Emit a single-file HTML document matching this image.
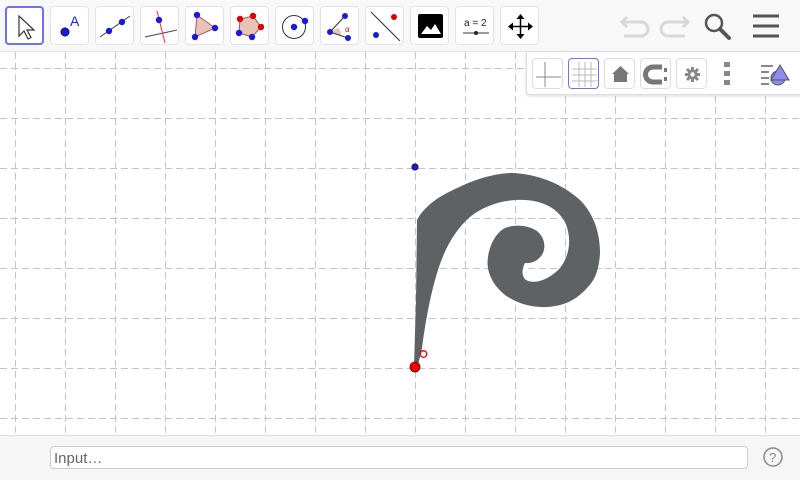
<!DOCTYPE html>
<html><head><meta charset="utf-8"><style>
*{margin:0;padding:0;box-sizing:border-box}
body{width:800px;height:480px;overflow:hidden;background:#fff;font-family:"Liberation Sans",sans-serif;position:relative}
.tb{position:absolute;left:0;top:0;width:800px;height:52px;background:#f8f8f8;border-bottom:1px solid #e0e0e0}
.btn{position:absolute;top:6px;width:39px;height:39px;background:#fff;border:1px solid #e2e2e2;border-radius:4px}
.sel{border:2px solid #6d72f2}
.btn svg{position:absolute;left:0;top:0}
.sb{position:absolute;left:526px;top:52px;width:280px;height:43px;background:#fff;border:1px solid #ddd;border-top:none;border-radius:0 0 0 4px;box-shadow:0 1px 3px rgba(0,0,0,.15)}
.sbt{position:absolute;top:6px;width:31px;height:31px;border:1px solid #ddd;border-radius:4px;background:#fff}
.bot{position:absolute;left:0;top:435px;width:800px;height:45px;background:#f6f6f6;border-top:1px solid #ddd}
.inp{position:absolute;left:50px;top:10px;width:698px;height:23px;background:#fff;border:1px solid #ccc;border-radius:4px;font-size:15px;color:#666;padding:3px 3px}
</style></head><body>
<svg style="position:absolute;left:0;top:0" width="800" height="480">
<g stroke="#c4c4c4" stroke-width="1" stroke-dasharray="7,4">
<line x1="15.5" y1="52" x2="15.5" y2="435"/><line x1="65.5" y1="52" x2="65.5" y2="435"/><line x1="115.5" y1="52" x2="115.5" y2="435"/><line x1="165.5" y1="52" x2="165.5" y2="435"/><line x1="215.5" y1="52" x2="215.5" y2="435"/><line x1="265.5" y1="52" x2="265.5" y2="435"/><line x1="315.5" y1="52" x2="315.5" y2="435"/><line x1="365.5" y1="52" x2="365.5" y2="435"/><line x1="415.5" y1="52" x2="415.5" y2="435"/><line x1="465.5" y1="52" x2="465.5" y2="435"/><line x1="515.5" y1="52" x2="515.5" y2="435"/><line x1="565.5" y1="52" x2="565.5" y2="435"/><line x1="615.5" y1="52" x2="615.5" y2="435"/><line x1="665.5" y1="52" x2="665.5" y2="435"/><line x1="715.5" y1="52" x2="715.5" y2="435"/><line x1="765.5" y1="52" x2="765.5" y2="435"/>
<line x1="0" y1="68.5" x2="800" y2="68.5"/><line x1="0" y1="118.5" x2="800" y2="118.5"/><line x1="0" y1="168.5" x2="800" y2="168.5"/><line x1="0" y1="218.5" x2="800" y2="218.5"/><line x1="0" y1="268.5" x2="800" y2="268.5"/><line x1="0" y1="318.5" x2="800" y2="318.5"/><line x1="0" y1="368.5" x2="800" y2="368.5"/><line x1="0" y1="418.5" x2="800" y2="418.5"/>
</g>
<path fill="#5f6264" d="M414,366 L416,300 L417,220 C425,205 440,196 455,189 C475,179 495,173 513,173 C535,174 560,182 580,200 C595,215 600,235 600,253 C599,270 595,280 587,288 C578,298 568,304 555,306 C540,309 520,306 505,295 C490,283 486,268 488,257 C490,243 497,232 505,228 C515,224 528,225 537,231 C544,237 546,245 543,253 C540,259 533,264 525,263 C522,268 521,276 526,280 C535,285 550,279 560,268 C570,255 572,238 565,222 C557,208 543,201 525,200 C505,199 485,205 470,217 C455,230 445,248 438,270 C430,295 425,325 422,348 L418,365 Z"/>
<circle cx="415" cy="167" r="3.2" fill="#1a1adc" stroke="#113" stroke-width=".8"/>
<circle cx="415" cy="367" r="5" fill="#e00" stroke="#700" stroke-width=".8"/>
<circle cx="423.5" cy="354" r="3.3" fill="#fff" stroke="#e00" stroke-width="1.3"/>
</svg>
<div class="tb">
<div class="btn sel" style="left:5px"><svg width="39" height="39"><path d="M13,9 L13,29 L18,24 L22,32 L25,30.5 L21,23 L28,23 Z" fill="#fff" stroke="#333" stroke-width="1.2" transform="translate(-1,-1)"/></svg></div>
<div class="btn" style="left:50px"><svg width="39" height="39"><circle cx="14" cy="25" r="4.2" fill="#1a1adc" stroke="#000" stroke-width=".6"/><text x="19" y="19" font-size="14" fill="#1a1aff" font-family="Liberation Sans">A</text></svg></div>
<div class="btn" style="left:95px"><svg width="39" height="39"><line x1="4" y1="30" x2="34" y2="9" stroke="#444"/><circle cx="13" cy="24" r="3.2" fill="#1a1adc"/><circle cx="26" cy="15" r="3.2" fill="#1a1adc"/></svg></div>
<div class="btn" style="left:140px"><svg width="39" height="39"><line x1="4" y1="30" x2="36" y2="23" stroke="#444"/><line x1="16" y1="4" x2="24" y2="36" stroke="#f33"/><circle cx="18" cy="13" r="3.2" fill="#1a1adc"/></svg></div>
<div class="btn" style="left:185px"><svg width="39" height="39"><path d="M11,8 L29,21 L9,30 Z" fill="#e8c4b8" stroke="#a55" stroke-width="1"/><circle cx="11" cy="8" r="3.2" fill="#1a1adc"/><circle cx="29" cy="21" r="3.2" fill="#1a1adc"/><circle cx="9" cy="30" r="3.2" fill="#1a1adc"/></svg></div>
<div class="btn" style="left:230px"><svg width="39" height="39"><path d="M9,12 L22,9 L30,20 L21,30 L8,26 Z" fill="#e8c4b8" stroke="#a55"/><circle cx="9" cy="12" r="3.2" fill="#d00"/><circle cx="22" cy="9" r="3.2" fill="#d00"/><circle cx="30" cy="20" r="3.2" fill="#d00"/><circle cx="21" cy="30" r="3.2" fill="#1a1adc"/><circle cx="8" cy="26" r="3.2" fill="#1a1adc"/></svg></div>
<div class="btn" style="left:275px"><svg width="39" height="39"><circle cx="18" cy="20" r="11.5" fill="none" stroke="#333"/><circle cx="18" cy="20" r="3.2" fill="#1a1adc"/><circle cx="29" cy="14" r="3.2" fill="#1a1adc"/></svg></div>
<div class="btn" style="left:320px"><svg width="39" height="39"><path d="M9,25 L17,21 A8,8 0 0,1 20,28 Z" fill="#e8c4b8"/><line x1="9" y1="25" x2="24" y2="9" stroke="#333"/><line x1="9" y1="25" x2="27" y2="31" stroke="#333"/><circle cx="9" cy="25" r="3" fill="#1a1adc"/><circle cx="24" cy="9" r="3" fill="#1a1adc"/><circle cx="27" cy="31" r="3" fill="#1a1adc"/><text x="24" y="25" font-size="8" fill="#e00">α</text></svg></div>
<div class="btn" style="left:365px"><svg width="39" height="39"><line x1="5" y1="5" x2="34" y2="34" stroke="#333"/><circle cx="10" cy="28" r="3" fill="#1a1adc"/><circle cx="28" cy="10" r="3" fill="#d00"/></svg></div>
<div class="btn" style="left:410px"><svg width="39" height="39"><rect x="7" y="7" width="25" height="24" rx="2" fill="#000"/><path d="M10,27 L16,19 L20,23 L24,17 L30,27 Z" fill="#fff"/></svg></div>
<div class="btn" style="left:455px"><svg width="39" height="39"><text x="8" y="19" font-size="10" fill="#222" font-family="Liberation Sans">a = 2</text><line x1="7" y1="26" x2="33" y2="26" stroke="#333"/><circle cx="20" cy="26" r="2" fill="#222"/></svg></div>
<div class="btn" style="left:500px"><svg width="39" height="39"><g stroke="#000" stroke-width="1.5"><line x1="19.5" y1="10" x2="19.5" y2="29"/><line x1="10" y1="19.5" x2="29" y2="19.5"/></g><g fill="#000"><path d="M19.5,7 L15.5,12 L23.5,12Z"/><path d="M19.5,32 L15.5,27 L23.5,27Z"/><path d="M7,19.5 L12,15.5 L12,23.5Z"/><path d="M32,19.5 L27,15.5 L27,23.5Z"/></g></svg></div>
<svg style="position:absolute;left:615px;top:10px" width="180" height="34">
<g fill="none" stroke="#d8d8d8" stroke-width="3"><path d="M12,7 L7,12 L12,17 M7,12 L26,12 A7,7 0 0,1 26,26 L9,26"/><path d="M68,7 L73,12 L68,17 M73,12 L53,12 A7,7 0 0,0 53,26 L70,26"/></g>
<circle cx="99" cy="13" r="8" fill="none" stroke="#555" stroke-width="2.5"/><line x1="105" y1="19" x2="114" y2="28" stroke="#555" stroke-width="4" stroke-linecap="round"/>
<g stroke="#555" stroke-width="3"><line x1="138" y1="6" x2="164" y2="6"/><line x1="138" y1="16" x2="164" y2="16"/><line x1="138" y1="26" x2="164" y2="26"/></g>
</svg>
</div>
<div class="sb">
<div class="sbt" style="left:5px"><svg width="31" height="31"><line x1="12" y1="3" x2="12" y2="28" stroke="#888"/><line x1="3" y1="18" x2="28" y2="18" stroke="#888"/></svg></div>
<div class="sbt" style="left:41px;border-color:#6d72f2"><svg width="31" height="31" stroke="#bbb"><line x1="10" y1="3" x2="10" y2="28"/><line x1="16" y1="3" x2="16" y2="28"/><line x1="22" y1="3" x2="22" y2="28"/><line x1="3" y1="10" x2="28" y2="10"/><line x1="3" y1="16" x2="28" y2="16"/><line x1="3" y1="22" x2="28" y2="22"/></svg></div>
<div class="sbt" style="left:77px"><svg width="31" height="31"><path d="M15.5,7 L7,15 L9,15 L9,23 L22,23 L22,15 L24,15 Z" fill="#777"/></svg></div>
<div class="sbt" style="left:113px"><svg width="31" height="31"><path d="M21,8 L12,8 A7.5,7.5 0 0,0 12,23 L21,23" fill="none" stroke="#777" stroke-width="5"/><rect x="23" y="9" width="3" height="4" fill="#777"/><rect x="23" y="18" width="3" height="4" fill="#777"/></svg></div>
<div class="sbt" style="left:149px"><svg width="31" height="31"><g stroke="#888" stroke-width="3"><line x1="15.5" y1="8" x2="15.5" y2="23"/><line x1="8" y1="15.5" x2="23" y2="15.5"/><line x1="10" y1="10" x2="21" y2="21"/><line x1="21" y1="10" x2="10" y2="21"/></g><circle cx="15.5" cy="15.5" r="5" fill="#888"/><circle cx="15.5" cy="15.5" r="2.2" fill="#fff"/></svg></div>
<svg style="position:absolute;left:190px;top:6px" width="90" height="32"><g fill="#888"><rect x="7" y="4" width="6" height="5"/><rect x="7" y="13" width="6" height="5"/><rect x="7" y="22" width="6" height="5"/></g>
<g stroke="#888" stroke-width="2"><line x1="44" y1="8" x2="56" y2="8"/><line x1="44" y1="14" x2="52" y2="14"/><line x1="44" y1="20" x2="52" y2="20"/><line x1="44" y1="26" x2="52" y2="26"/></g>
<circle cx="61" cy="20" r="7" fill="#8c8cf0" stroke="#555"/><path d="M54,22 L63,7 L72,22 Z" fill="#8c8cf0" stroke="#555"/></svg>
</div>
<div class="bot"><div class="inp">Input…</div>
<svg style="position:absolute;left:762px;top:10px" width="22" height="22"><circle cx="11" cy="11" r="9" fill="none" stroke="#888" stroke-width="1.5"/><text x="7" y="16" font-size="13" fill="#888" font-family="Liberation Sans">?</text></svg></div>
</body></html>
